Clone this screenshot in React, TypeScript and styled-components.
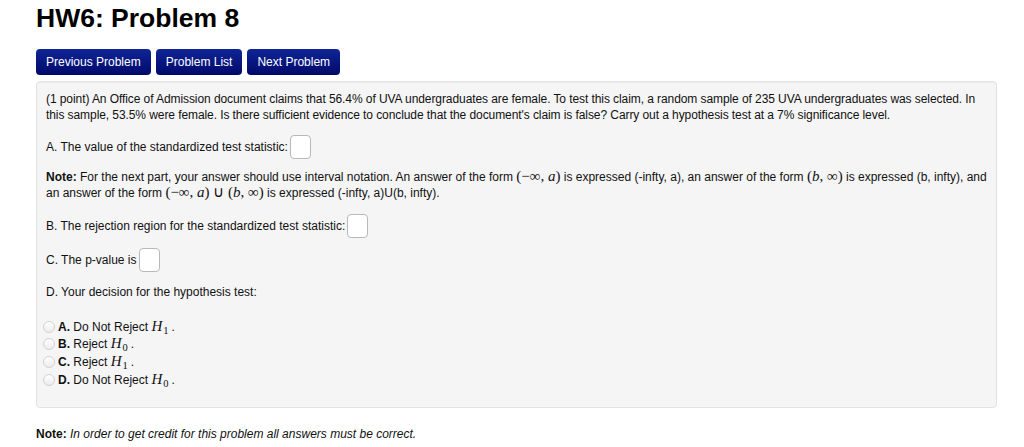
import React from 'react'
import styled, { createGlobalStyle } from 'styled-components'

const Global = createGlobalStyle`
body {
  margin: 0;
  background: #fff;
  font-family: "Liberation Sans", Arial, Helvetica, sans-serif;
  color: #111;
}
`

const Page = styled.div`
padding: 0 27px 0 36px;
`

const Title = styled.h1`
margin: 3px 0 0;
font-size: 26.5px;
line-height: 30px;
font-weight: bold;
color: #000;
`

const Nav = styled.div`
display: flex;
gap: 5px;
margin-top: 16px;
`

const NavButton = styled.button`
height: 26px;
padding: 0 10px;
border: none;
border-radius: 4px;
background: linear-gradient(#0f2596, #00096a);
color: #fff;
font-family: "Liberation Sans", Arial, sans-serif;
font-size: 12px;
cursor: pointer;
`

const Panel = styled.div`
margin-top: 6px;
background: #f5f5f5;
border: 1px solid #e3e3e3;
border-radius: 4px;
padding: 9px 9px 19px;
font-size: 12px;
line-height: 16px;
box-shadow: inset 0 1px 1px rgba(0, 0, 0, 0.04);
`

const Para = styled.p<{ $tight?: boolean; $after?: number }>`
margin: 0 0 ${(p) => p.$after ?? 12}px;
letter-spacing: ${(p) => (p.$tight ? '-0.08px' : 'normal')};
`

const Row = styled.div<{ $after: number }>`
display: flex;
align-items: center;
height: 24px;
margin-bottom: ${(p) => p.$after}px;
`

const AnswerBox = styled.span`
display: inline-block;
width: 19px;
height: 22px;
margin-left: 2px;
background: #fff;
border: 1px solid #b9b9b9;
border-radius: 4px;
`

const Math = styled.span`
font-family: "Liberation Serif", "Times New Roman", serif;
font-size: 15px;
line-height: 1;
`

const Var = styled.i`
font-family: "Liberation Serif", "Times New Roman", serif;
font-size: 15px;
line-height: 1;
`

const Sub = styled.sub`
font-family: "Liberation Serif", "Times New Roman", serif;
font-size: 10.5px;
font-style: normal;
vertical-align: -3px;
line-height: 0;
margin: 0 3px 0 1px;
`

const Choices = styled.div`
display: flex;
flex-direction: column;
`

const Choice = styled.label`
display: flex;
align-items: center;
height: 17.6px;
margin-left: -3px;
`

const Radio = styled.span`
width: 12px;
height: 12px;
margin-right: 3px;
border-radius: 50%;
border: 1px solid #d2d2d2;
background: linear-gradient(#ffffff, #ececec);
box-sizing: border-box;
`

const Footer = styled.p`
margin: 18px 0 0;
font-size: 12px;
line-height: 16px;
em {
  font-style: italic;
}
`

const H = ({ n }: { n: number }) => (
  <>
    <Var>H</Var>
    <Sub>{n}</Sub>
  </>
)

const choices = [
  { key: 'A', text: 'Do Not Reject ', n: 1 },
  { key: 'B', text: 'Reject ', n: 0 },
  { key: 'C', text: 'Reject ', n: 1 },
  { key: 'D', text: 'Do Not Reject ', n: 0 },
]

const App = () => {
  return (
    <Page>
      <Global />
      <Title>HW6: Problem 8</Title>
      <Nav>
        <NavButton>Previous Problem</NavButton>
        <NavButton>Problem List</NavButton>
        <NavButton>Next Problem</NavButton>
      </Nav>
      <Panel>
        <Para $tight>
          (1 point) An Office of Admission document claims that 56.4% of UVA undergraduates are female. To test this
          claim, a random sample of 235 UVA undergraduates was selected. In this sample, 53.5% were female. Is there
          sufficient evidence to conclude that the document's claim is false? Carry out a hypothesis test at a 7%
          significance level.
        </Para>
        <Row $after={10}>
          A. The value of the standardized test statistic:
          <AnswerBox />
        </Row>
        <Para $after={13}>
          <b>Note:</b> For the next part, your answer should use interval notation. An answer of the form{' '}
          <Math>(−∞, <i>a</i>)</Math> is expressed (-infty, a), an answer of the form <Math>(<i>b</i>, ∞)</Math> is
          expressed (b, infty), and an answer of the form <Math>(−∞, <i>a</i>) ∪ (<i>b</i>, ∞)</Math> is expressed
          (-infty, a)U(b, infty).
        </Para>
        <Row $after={10}>
          B. The rejection region for the standardized test statistic:
          <AnswerBox />
        </Row>
        <Row $after={12}>
          C. The p-value is
          <AnswerBox />
        </Row>
        <Para $after={18}>D. Your decision for the hypothesis test:</Para>
        <Choices>
          {choices.map((c) => (
            <Choice key={c.key}>
              <Radio />
              <span>
                <b>{c.key}.</b> {c.text}
                <H n={c.n} />.
              </span>
            </Choice>
          ))}
        </Choices>
      </Panel>
      <Footer>
        <b>Note:</b> <em>In order to get credit for this problem all answers must be correct.</em>
      </Footer>
    </Page>
  )
}

export default App
